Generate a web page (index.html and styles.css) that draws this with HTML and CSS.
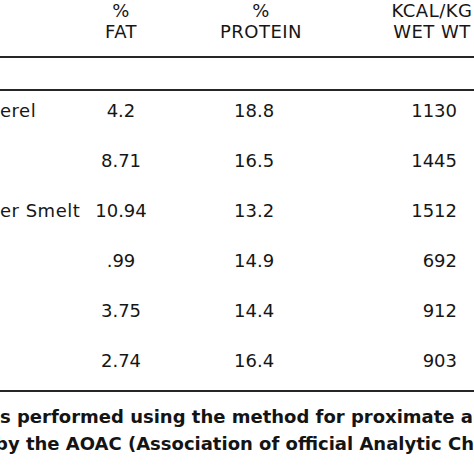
FILE: index.html
```html
<!DOCTYPE html>
<html>
<head>
<meta charset="utf-8">
<link rel="stylesheet" href="styles.css">
</head>
<body>
<div class="sheet">
  <div class="grid head">
    <div class="c fat">%<br>FAT</div>
    <div class="c pro">%<br>PROTEIN</div>
    <div class="c kc">KCAL/KG<br>WET WT</div>
  </div>
  <div class="rule"></div>
  <div class="gap"></div>
  <div class="rule"></div>
  <div class="grid body">
    <div class="lab">erel</div><div class="fat num">4.2</div><div class="pro num">18.8</div><div class="kc num">1130</div>
    <div class="lab"></div><div class="fat num">8.71</div><div class="pro num">16.5</div><div class="kc num">1445</div>
    <div class="lab">er Smelt</div><div class="fat num">10.94</div><div class="pro num">13.2</div><div class="kc num">1512</div>
    <div class="lab"></div><div class="fat num">.99</div><div class="pro num">14.9</div><div class="kc num">692</div>
    <div class="lab"></div><div class="fat num">3.75</div><div class="pro num">14.4</div><div class="kc num">912</div>
    <div class="lab"></div><div class="fat num">2.74</div><div class="pro num">16.4</div><div class="kc num">903</div>
  </div>
  <div class="rule bottom"></div>
  <div class="note">
    <p class="l1">s performed using the method for proximate analysis</p>
    <p class="l2">by the AOAC (Association of official Analytic Chemists)</p>
  </div>
</div>
</body>
</html>
```
FILE: styles.css
```css
html, body {
  margin: 0;
  padding: 0;
  background: #fff;
  overflow: hidden;
}
body {
  width: 474px;
  height: 474px;
}
.sheet {
  width: 520px;
  font-family: "DejaVu Sans", sans-serif;
  font-size: 18px;
  color: #161616;
}
.grid {
  display: grid;
  grid-template-columns: 90px 62px 48px 122px 50px 120px;
}
.lab { grid-column: 1; white-space: nowrap; letter-spacing: 0.5px; }
.fat { grid-column: 2; text-align: center; white-space: nowrap; }
.pro { grid-column: 4; text-align: center; }
.kc { grid-column: 6; text-align: center; white-space: nowrap; }
.head {
  line-height: 21px;
  height: 56px;
  letter-spacing: 0.5px;
}
.rule {
  height: 2px;
  background: #262626;
}
.gap { height: 31px; }
.body {
  line-height: 40px;
  row-gap: 10px;
}
.pro.num { text-align: left; padding-left: 34px; }
.kc.num { text-align: right; padding-right: 35px; }
.bottom { margin-top: 9px; }
.note {
  font-weight: bold;
  font-size: 18px;
  line-height: 27px;
  padding-top: 11px;
  white-space: nowrap;
  color: #141414;
}
.note p { margin: 0; }
.l2 { text-indent: -5px; }
```
